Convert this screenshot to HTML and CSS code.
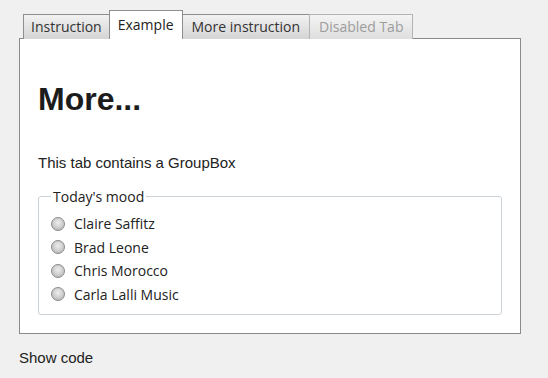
FILE: index.html
```html
<!DOCTYPE html>
<html lang="en">

<head>
    <meta charset="UTF-8">
    <meta name="viewport" content="width=device-width, initial-scale=1.0">
    <title>Tabs Example</title>
    <link rel="stylesheet" href="styles.css">
</head>

<body>
    <div class="tabs">
        <div class="tab">Instruction</div>
        <div class="tab active">Example</div>
        <div class="tab">More instruction</div>
        <div class="tab disabled">Disabled Tab</div>
    </div>

    <div class="panel">
        <h1>More...</h1>
        <p>This tab contains a GroupBox</p>

        <!-- GroupBox -->
        <fieldset class="groupbox">
            <legend>Today's mood</legend>
            <label class="option"><span class="radio"></span>Claire Saffitz</label>
            <label class="option"><span class="radio"></span>Brad Leone</label>
            <label class="option"><span class="radio"></span>Chris Morocco</label>
            <label class="option"><span class="radio"></span>Carla Lalli Music</label>
        </fieldset>
    </div>

    <div class="show-code">Show code</div>
</body>

</html>
```

FILE: styles.css
```css
body {
    font-family: "Liberation Sans", Arial, sans-serif;
    font-size: 15px;
    color: #222;
    margin: 0;
    padding: 10px 27px 0 19px;
    background-color: #f0f0f0;
}

.tabs {
    display: flex;
    align-items: flex-end;
    padding-left: 4px;
    margin-bottom: -1px;
    position: relative;
    z-index: 1;
}

.tab {
    font-family: "Open Sans", sans-serif;
    font-size: 14px;
    color: #333;
    height: 24px;
    line-height: 24px;
    padding: 0 7px;
    border: 1px solid #8e8e8e;
    border-bottom: none;
    margin-right: -1px;
    background: linear-gradient(#f2f2f2, #d4d4d4);
}

.tab.active {
    height: 28px;
    line-height: 28px;
    padding: 0 8px;
    background: white;
    color: #222;
}

.tab:nth-child(3) {
    padding: 0 9px;
}

.tab.disabled {
    color: #9c9c9c;
    border-color: #b4b4b4;
    padding: 0 9px;
    background: linear-gradient(#f4f4f4, #dedede);
}

.panel {
    background: white;
    border: 1px solid #8a8a8a;
    padding: 42px 18px 18px;
}

h1 {
    font-size: 32px;
    margin: 0 0 36px;
    color: #1c1c1c;
}

p {
    margin: 0;
}

.groupbox {
    margin: 16px 0 0;
    padding: 6px 12px 8px;
    border: 1px solid #ccd3d8;
    border-radius: 3px;
    font-family: "Open Sans", sans-serif;
    font-size: 14px;
}

legend {
    padding: 0 2px;
    color: #222;
}

.option {
    display: flex;
    align-items: center;
    height: 23.5px;
    color: #222;
}

.radio {
    width: 12px;
    height: 12px;
    border: 1px solid #8a8a8a;
    border-radius: 50%;
    margin-right: 9px;
    background: radial-gradient(circle at 50% 40%, #eeeeee, #c8c8c8 60%, #a8a8a8);
}

.show-code {
    margin-top: 15px;
}
```
